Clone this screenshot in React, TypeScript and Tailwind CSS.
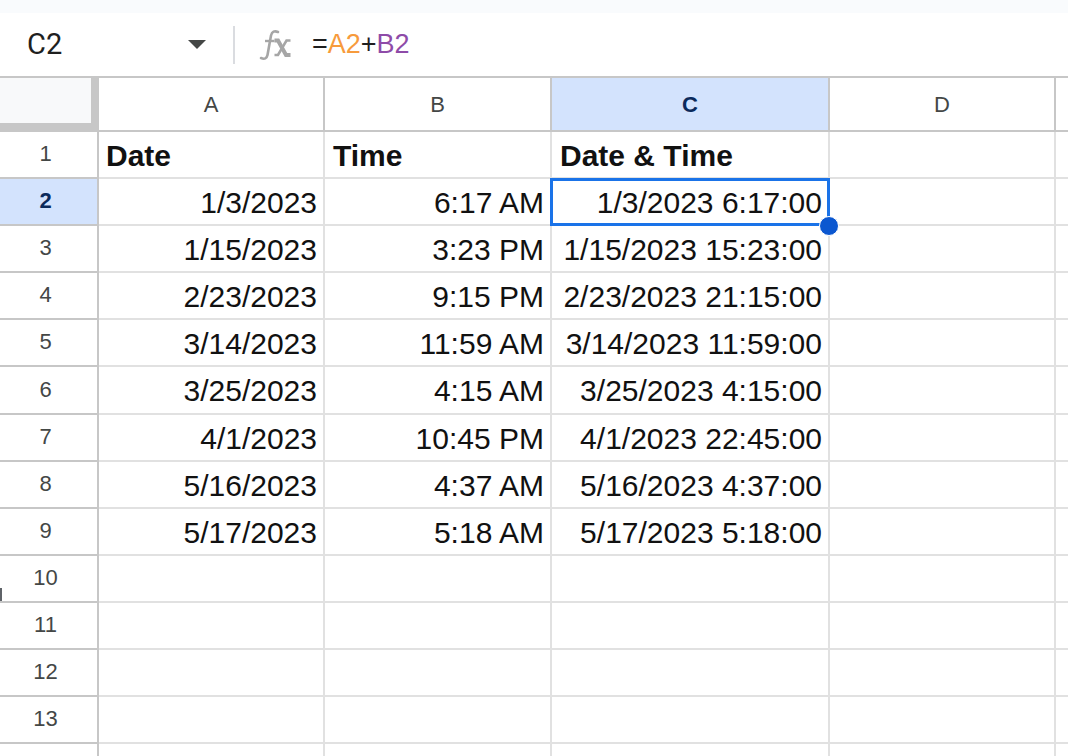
const cols = ["A", "B", "C", "D"];

const rows = [
  ["1/3/2023", "6:17 AM", "1/3/2023 6:17:00"],
  ["1/15/2023", "3:23 PM", "1/15/2023 15:23:00"],
  ["2/23/2023", "9:15 PM", "2/23/2023 21:15:00"],
  ["3/14/2023", "11:59 AM", "3/14/2023 11:59:00"],
  ["3/25/2023", "4:15 AM", "3/25/2023 4:15:00"],
  ["4/1/2023", "10:45 PM", "4/1/2023 22:45:00"],
  ["5/16/2023", "4:37 AM", "5/16/2023 4:37:00"],
  ["5/17/2023", "5:18 AM", "5/17/2023 5:18:00"],
];

// row 7 is one pixel taller in the screenshot
const heights = [47, 47, 47, 47, 47, 48, 47, 47, 47, 47, 47, 47, 47];
const rowHeightClass = ["h-[47px]", "h-[48px]"];

function FxIcon() {
  return (
    <svg width="36" height="36" viewBox="0 0 36 36" className="ml-[22px] mt-[2px]">
      <path d="M21 4c-3.500-1.500-6-.5-7 3.500L10.500 27c-.7 3.500-3 4.500-6.500 3" fill="none" stroke="#a6a6a6" strokeWidth="2.600" strokeLinecap="round" />
      <path d="M8 13h9.500" fill="none" stroke="#a6a6a6" strokeWidth="2.400" />
      <path d="M17.500 12.500h3.500l8 14.500h4.500" fill="none" stroke="#a6a6a6" strokeWidth="4" />
      <path d="M33.500 12.500h-4l-8.500 14.500h-3.500" fill="none" stroke="#a6a6a6" strokeWidth="2.600" />
    </svg>
  );
}

function RowHead({ n, active, h }: { n?: number; active?: boolean; h: number }) {
  return (
    <div
      className={`flex items-center justify-center border-r-2 border-b-2 border-r-[#c7c7c7] border-b-[#c7c7c7] pr-[6px] pb-[2px] text-[22px] ${rowHeightClass[h === 48 ? 1 : 0]} ${active ? "bg-[#d3e3fd] font-bold text-[#0b2a5b]" : "bg-white text-[#444746]"}`}
    >
      {n}
    </div>
  );
}

function Cell({ children, bold, h, inset }: { children?: string; bold?: boolean; h: number; inset?: boolean }) {
  return (
    <div
      className={`flex items-center overflow-hidden whitespace-nowrap border-r-2 border-b-2 border-[#e1e1e1] pt-[1px] pr-[6px] text-[30px] text-[#111111] ${inset ? "pl-[8px]" : "pl-[7px]"} ${rowHeightClass[h === 48 ? 1 : 0]} ${bold ? "justify-start font-bold" : "justify-end"}`}
    >
      {children}
    </div>
  );
}

export default function App() {
  return (
    <div className="relative h-[756px] w-[1068px] overflow-hidden bg-white font-['Liberation_Sans',Arial,sans-serif]">
      <div className="h-[13px] bg-[#f9fbfd]" />

      {/* formula bar */}
      <div className="flex h-[65px] items-center border-b-2 border-[#c7c7c7]">
        <div className="w-[188px] pl-[27px] font-['Roboto',sans-serif] text-[29px] text-[#1f1f1f]">C2</div>
        <div className="h-0 w-0 border-x-[9px] border-t-[9px] border-x-transparent border-t-[#444746]" />
        <div className="ml-[27px] h-[38px] w-[2px] bg-[#dadce0]" />
        <FxIcon />
        <div className="ml-[19px] text-[27px] text-[#1f1f1f]">
          =<span className="text-[#f79b3c]">A2</span>+<span className="text-[#8e4ba8]">B2</span>
        </div>
      </div>

      {/* sheet grid */}
      <div className="grid grid-cols-[99px_226px_227px_278px_226px_1fr]">
        <div className="h-[54px] border-r-[8px] border-b-[9px] border-[#c7c7c7] bg-[#f8f9fa]" />
        {cols.map((c) => (
          <div
            key={c}
            className={`flex h-[54px] items-center justify-center border-r-2 border-b-2 border-[#c7c7c7] pt-[1px] text-[22px] ${c === "C" ? "bg-[#d3e3fd] font-bold text-[#0b2a5b]" : "text-[#444746]"}`}
          >
            {c}
          </div>
        ))}
        <div className="h-[54px] border-b-2 border-[#c7c7c7]" />

        <RowHead n={1} h={47} />
        <Cell bold h={47}>Date</Cell>
        <Cell bold inset h={47}>Time</Cell>
        <Cell bold inset h={47}>Date &amp; Time</Cell>
        <Cell h={47} />
        <div className="h-[47px] border-b-2 border-[#e1e1e1]" />

        {heights.slice(1).map((h, i) => {
          const r = rows[i] ?? ["", "", ""];
          return (
            <div key={i} className="contents">
              <RowHead n={i + 2} active={i === 0} h={h} />
              <Cell h={h}>{r[0]}</Cell>
              <Cell h={h}>{r[1]}</Cell>
              <Cell h={h}>{r[2]}</Cell>
              <Cell h={h} />
              <div className={`border-b-2 border-[#e1e1e1] ${rowHeightClass[h === 48 ? 1 : 0]}`} />
            </div>
          );
        })}

        {/* row 14 is cut off by the bottom of the window */}
        <RowHead h={47} />
        <Cell h={47} />
        <Cell h={47} />
        <Cell h={47} />
        <Cell h={47} />
        <div className="h-[47px]" />
      </div>

      {/* selected cell C2 */}
      <div className="absolute left-[550px] top-[178px] h-[48px] w-[280px] border-[3px] border-[#1a73e8]" />
      <div className="absolute left-[819px] top-[216px] h-[20px] w-[20px] rounded-full border border-white bg-[#0b57d0]" />
      <div className="absolute left-0 top-[588px] h-[13px] w-[2px] bg-[#5f6368]" />
    </div>
  );
}
